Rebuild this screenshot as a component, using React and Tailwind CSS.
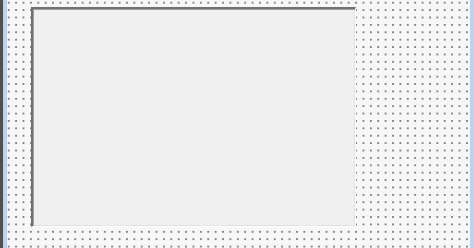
export default function App() {
  return (
    <div className="flex h-[248px] w-[474px] overflow-hidden bg-[#f7f7f7]">
      <div className="w-[3px] shrink-0 bg-[#505050]" />
      <div className="w-[4px] shrink-0 bg-[#bcd2ee]" />
      <div className="flex-1 bg-[radial-gradient(circle,#808080_0.7px,transparent_0.9px)] bg-[length:7.4px_7.4px] bg-[position:-2px_-1px] pl-[24px] pt-[7px]">
        <div className="h-[220px] w-[325px] border-t-2 border-l-2 border-r border-b border-t-[#707070] border-l-[#707070] border-r-[#ffffff] border-b-[#ffffff] bg-[#f0f0f0] shadow-[inset_1px_1px_0_#a0a0a0,inset_-1px_-1px_0_#e3e3e3]" />
      </div>
      <div className="w-[4px] shrink-0 bg-[#bcd2ee]" />
    </div>
  )
}
